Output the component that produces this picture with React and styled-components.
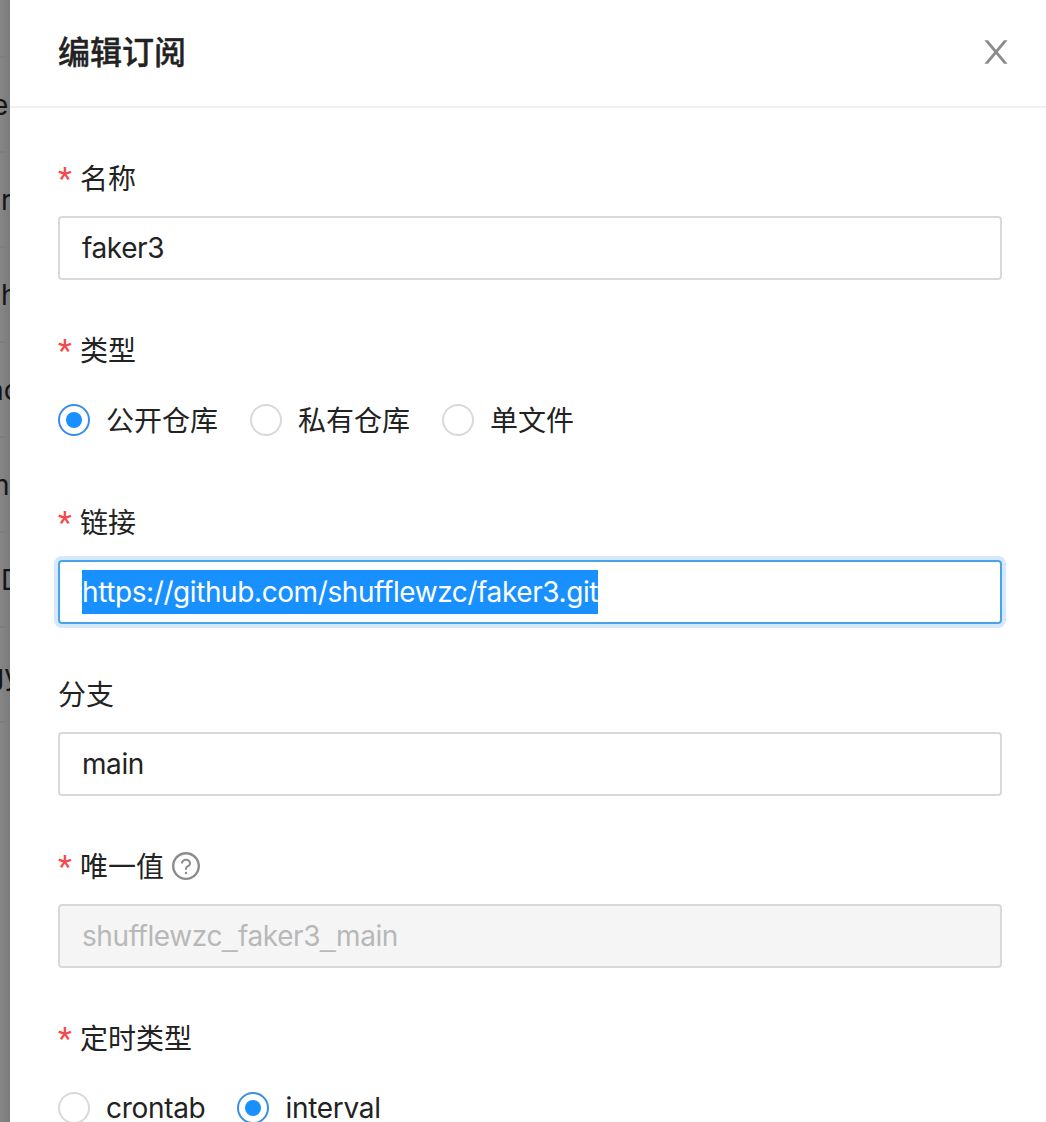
import React, { useState } from 'react';
import styled, { createGlobalStyle, css } from 'styled-components';
import { AiOutlineQuestionCircle } from 'react-icons/ai';

const GlobalStyle = createGlobalStyle`
  * {
    box-sizing: border-box;
  }
  body {
    margin: 0;
    overflow: hidden;
    color: #222;
    font: 28px/44px Inter, 'Noto Sans CJK SC', sans-serif;
    font-feature-settings: 'calt' 0;
  }
`;

const Page = styled.div`
  display: flex;
  height: 1122px;
  overflow: hidden;
`;

const Behind = styled.div`
  flex: none;
  width: 10px;
  overflow: hidden;
  background: linear-gradient(90deg, #868686, #7b7b7b);
`;

const BehindRow = styled.div`
  height: ${props => props.$height || 95}px;
  display: flex;
  align-items: center;
  border-bottom: 2px solid #7d7d7d;
  color: #151515;
  white-space: nowrap;
  text-indent: ${props => props.$shift || 0}px;
`;

const Drawer = styled.div`
  flex: 1;
  background: #fff;
`;

const Header = styled.div`
  display: flex;
  align-items: center;
  justify-content: space-between;
  height: 108px;
  padding: 0 34px 2px 48px;
  border-bottom: 2px solid #f0f0f0;
`;

const Title = styled.div`
  padding-top: 2px;
  font-size: 32px;
  font-weight: 500;
  -webkit-text-stroke: 0.4px #262626;
`;

const CloseButton = styled.button`
  display: flex;
  padding: 0;
  border: 0;
  background: none;
  color: #8c8c8c;
`;

const Form = styled.div`
  padding: 48px 44px 0 48px;
`;

const FormItem = styled.div`
  margin-bottom: 48px;
`;

const Label = styled.div`
  display: flex;
  align-items: center;
  height: 60px;
  padding: 1px 0 16px;
  svg {
    margin: -1px 0 0 6px;
    color: #8c8c8c;
  }
`;

const Required = styled.span`
  width: 22px;
  padding-bottom: 2px;
  color: #f5484b;
  font-family: Roboto, sans-serif;
  font-size: 32px;
`;

const InputBox = styled.div`
  display: flex;
  align-items: center;
  height: 64px;
  padding: 0 22px;
  border: 2px solid #d9d9d9;
  border-radius: 4px;
  ${props => props.$focused && css`
    border-color: #4aa3e8;
    box-shadow: 0 0 0 4px #d4e9fb;
  `}
  ${props => props.$disabled && css`
    background: #f5f5f5;
    color: #b8b8b8;
  `}
`;

const InputText = styled.span`
  letter-spacing: -0.41px;
  ${props => props.$selected && css`
    background: #1890ff;
    color: #fff;
  `}
`;

const Underscore = styled.span`
  font-family: 'Liberation Sans', sans-serif;
  letter-spacing: 0.4px;
`;

const RadioGroup = styled.div`
  display: flex;
  align-items: center;
  height: 64px;
`;

const RadioItem = styled.div`
  display: flex;
  align-items: center;
  margin-right: 16px;
`;

const RadioCircle = styled.span`
  display: flex;
  align-items: center;
  justify-content: center;
  width: 32px;
  height: 32px;
  border: 2px solid ${props => (props.$checked ? '#3a8ee6' : '#d9d9d9')};
  border-radius: 50%;
  &::after {
    content: '';
    width: 16px;
    height: 16px;
    border-radius: 50%;
    background: ${props => (props.$checked ? '#1890ff' : 'transparent')};
  }
`;

const RadioText = styled.span`
  padding: ${props => (props.$latin ? 0 : 2)}px 16px 0;
  letter-spacing: ${props => (props.$latin ? -0.3 : 0)}px;
`;

const behindRows = [
  { text: 'e', shift: -8 },
  { text: 'r', shift: 1 },
  { text: 'h', shift: 1 },
  { text: 'ac', shift: -12 },
  { text: 'm', shift: -15 },
  { text: 'D', shift: 1 },
  { text: 'gy', shift: -13 },
];

const typeOptions = [
  { value: 'public', label: '公开仓库' },
  { value: 'private', label: '私有仓库' },
  { value: 'file', label: '单文件' },
];

const scheduleOptions = [
  { value: 'crontab', label: 'crontab' },
  { value: 'interval', label: 'interval' },
];

function CloseIcon() {
  return (
    <svg width="32" height="32" viewBox="64 64 896 896" fill="currentColor">
      <path d="M563.8 512l262.5-312.9c4.4-5.2.7-13.1-6.1-13.1h-79.8c-4.7 0-9.2 2.1-12.3 5.7L511.6 449.8 295.1 191.7c-3-3.6-7.5-5.7-12.3-5.7H203c-6.8 0-10.5 7.9-6.1 13.1L459.4 512 196.9 824.9A7.95 7.95 0 00203 838h79.8c4.7 0 9.2-2.1 12.3-5.7l216.5-258.1 216.5 258.1c3 3.6 7.5 5.7 12.3 5.7h79.8c6.8 0 10.5-7.9 6.1-13.1L563.8 512z" />
    </svg>
  );
}

function Item(props) {
  const { label, required, help, children } = props;
  return (
    <FormItem>
      <Label>
        {required && <Required>*</Required>}
        {label}
        {help && <AiOutlineQuestionCircle size={32} />}
      </Label>
      {children}
    </FormItem>
  );
}

function Radios(props) {
  const { options, value, latin, onChange } = props;
  return (
    <RadioGroup>
      {options.map(o => (
        <RadioItem key={o.value} onClick={() => onChange(o.value)}>
          <RadioCircle $checked={o.value === value} />
          <RadioText $latin={latin}>{o.label}</RadioText>
        </RadioItem>
      ))}
    </RadioGroup>
  );
}

export default function App() {
  const [type, setType] = useState('public');
  const [scheduleType, setScheduleType] = useState('interval');
  return (
    <Page>
      <GlobalStyle />
      <Behind>
        <BehindRow $height={58} />
        {behindRows.map(r => (
          <BehindRow key={r.text} $shift={r.shift}>{r.text}</BehindRow>
        ))}
      </Behind>
      <Drawer>
        <Header>
          <Title>编辑订阅</Title>
          <CloseButton><CloseIcon /></CloseButton>
        </Header>
        <Form>
          <Item label="名称" required>
            <InputBox><InputText>faker3</InputText></InputBox>
          </Item>
          <Item label="类型" required>
            <Radios options={typeOptions} value={type} onChange={setType} />
          </Item>
          <Item label="链接" required>
            <InputBox $focused>
              <InputText $selected>https://github.com/shufflewzc/faker3.git</InputText>
            </InputBox>
          </Item>
          <Item label="分支">
            <InputBox><InputText>main</InputText></InputBox>
          </Item>
          <Item label="唯一值" required help>
            <InputBox $disabled>
              <InputText>
                shufflewzc<Underscore>_</Underscore>faker3<Underscore>_</Underscore>main
              </InputText>
            </InputBox>
          </Item>
          <Item label="定时类型" required>
            <Radios options={scheduleOptions} value={scheduleType} latin onChange={setScheduleType} />
          </Item>
        </Form>
      </Drawer>
    </Page>
  );
}
